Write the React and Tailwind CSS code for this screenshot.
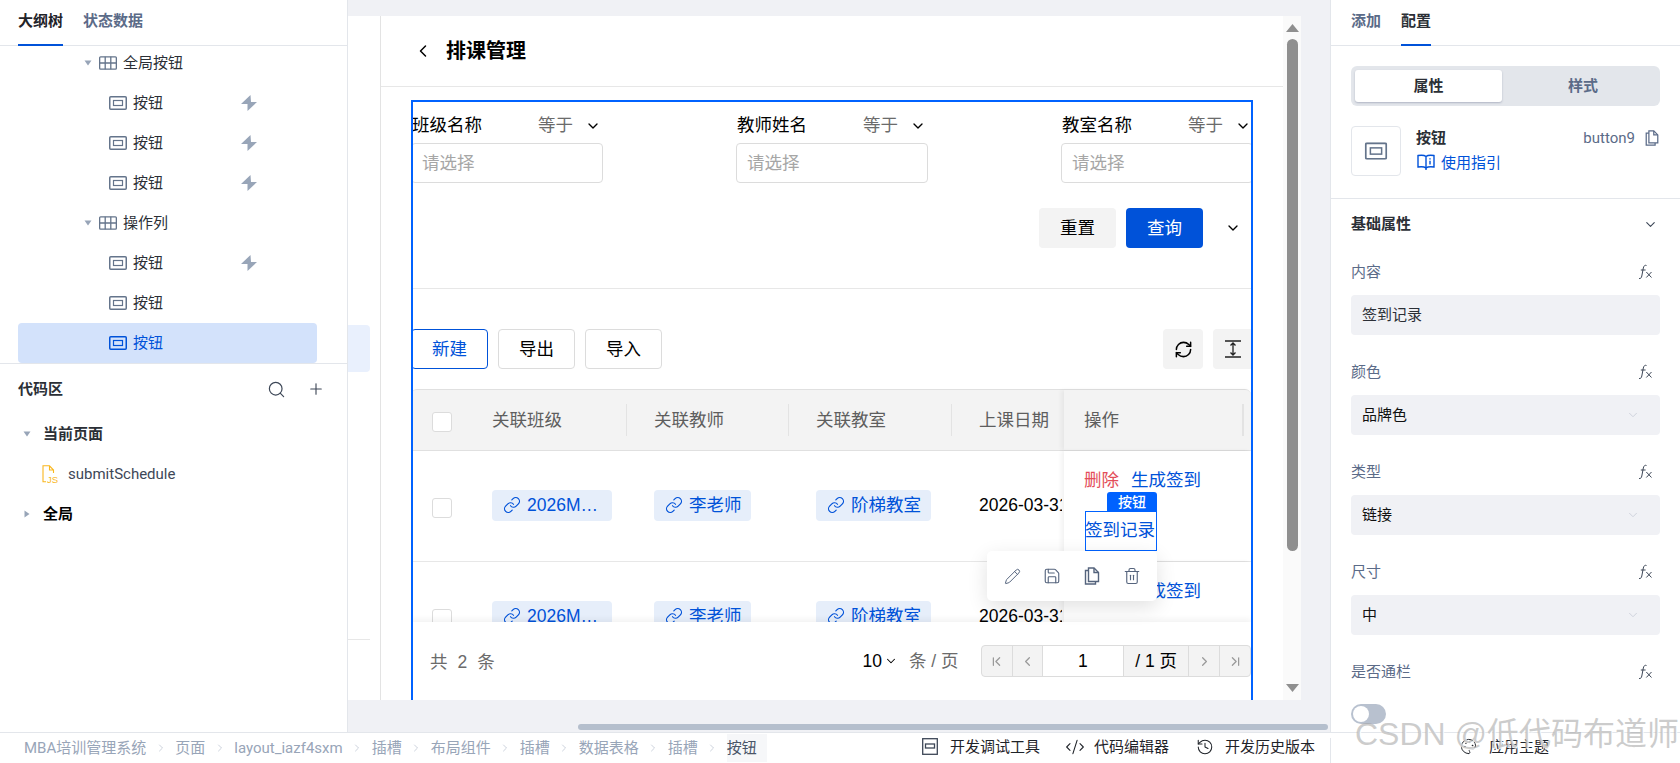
import { ChevronDown, ChevronFirst, ChevronLast, ChevronLeft, ChevronRight, CodeXml, History, Link, Palette, Pencil, Plus, RefreshCw, Save, Search, Trash2 } from "lucide-react";

const FilterNames = ["班级名称", "教师姓名", "教室名称"];
const TreeRows = [
  { type: "group", title: "全局按钮" },
  { type: "item", bolt: true },
  { type: "item", bolt: true },
  { type: "item", bolt: true },
  { type: "group", title: "操作列" },
  { type: "item", bolt: true },
  { type: "item" },
  { type: "item", active: true },
];
const Crumbs = ["MBA培训管理系统", "页面", "layout_iazf4sxm", "插槽", "布局组件", "插槽", "数据表格", "插槽"];
const Fields = [
  { label: "内容", value: "签到记录" },
  { label: "颜色", value: "品牌色", select: true },
  { label: "类型", value: "链接", select: true },
  { label: "尺寸", value: "中", select: true },
];

function ButtonIcon({ className = "text-[#64748b]" }) {
  return (
    <svg width="18" height="14" viewBox="0 0 18 14" fill="none" stroke="currentColor" className={className}>
      <rect x="0.75" y="0.75" width="16.5" height="12.5" rx="1" strokeWidth="1.5" />
      <rect x="4.5" y="4.5" width="9" height="5" strokeWidth="1.2" />
    </svg>
  );
}

function TableIcon() {
  return (
    <svg width="18" height="14" viewBox="0 0 18 14" fill="none" stroke="#64748b" strokeWidth="1.3">
      <rect x="0.65" y="0.8" width="16.7" height="12.4" rx="1" />
      <path d="M0.6 7H17.4M6.2 0.8V13.2M11.8 0.8V13.2" />
    </svg>
  );
}

function Bolt() {
  return (
    <svg width="16" height="16" viewBox="0 0 16 16" fill="#98a5b8">
      <path d="M9.5 0L0 9H6.5V16L16 7H10Z" />
    </svg>
  );
}

function Caret({ right }) {
  return (
    <svg width="8" height="8" viewBox="0 0 8 8" fill="#98a5b8" className={right ? "-rotate-90" : ""}>
      <path d="M0.5 1.5H7.5L4 6.5Z" />
    </svg>
  );
}

function FxIcon() {
  return (
    <svg width="15" height="16" viewBox="0 0 15 16" fill="none" stroke="#3d4757" strokeWidth="1">
      <path d="M8.5 1.5C7 0.8 5.8 1.8 5.3 4L3.8 12C3.4 14 2.4 15 1 14.4M2.8 6H7.6M8.3 8L13.5 13.5M13.5 8L8.3 13.5" />
    </svg>
  );
}

function CopyIcon({ size = 18 }) {
  return (
    <svg width={size} height={size} viewBox="0 0 18 18" fill="none" stroke="currentColor" strokeWidth="1.4">
      <path d="M5.5 1H11L15.5 5.5V14.5H5.5Z" />
      <path d="M11 1V5.5H15.5M5.5 3.5H2.5V17H12.5V14.5" />
    </svg>
  );
}

function TagCell({ text, width }) {
  return (
    <div className={`flex items-center h-[31px] mb-[2px] rounded-[4px] bg-[#e6eefa] pl-[11px] text-[#0052d9] text-[17.5px] ${width}`}>
      <Link size={18} strokeWidth={1.6} className="shrink-0" />
      <span className="ml-[6px] whitespace-nowrap">{text}</span>
    </div>
  );
}

function TableRow({ first }) {
  return (
    <div className="flex h-[111px] border-b border-[#e7e7e7]">
      <div className="w-[53px] shrink-0 flex items-center pl-[21px]">
        <div className="mt-[3px] w-[20px] h-[20px] rounded-[3px] border border-[#dcdcdc] bg-white" />
      </div>
      <div className="w-[163px] shrink-0 flex items-center pl-[28px]">
        <TagCell text="2026M…" width="w-[120px]" />
      </div>
      <div className="w-[162px] shrink-0 flex items-center pl-[27px]">
        <TagCell text="李老师" width="w-[97px]" />
      </div>
      <div className="w-[163px] shrink-0 flex items-center pl-[27px]">
        <TagCell text="阶梯教室" width="w-[115px]" />
      </div>
      <div className="w-[110px] mr-[2px] shrink-0 flex items-center pl-[27px] pb-[2px] overflow-hidden text-[17.5px] text-black whitespace-nowrap">2026-03-31</div>
      <div className="relative w-[187px] shrink-0 bg-white pl-[20px] pt-[17px] text-[17.5px] shadow-[-3px_0_4px_rgba(0,0,0,0.05)]">
        <div className="flex gap-[12px] leading-[24px]">
          <span className="text-[#e34d59]">删除</span>
          <span className="text-[#0052d9]">生成签到</span>
        </div>
        {first && (
          <>
            <div className="relative mt-[19px] ml-[1px] w-[72px] h-[40px] border border-[#0062ff] text-[#0052d9] leading-[36px] whitespace-nowrap">
              <span className="-ml-px">签到记录</span>
              <div className="absolute -top-[20px] -right-px w-[50px] h-[20px] rounded-t-[3px] bg-[#0062ff] text-white text-[14px] font-medium leading-[20px] text-center">按钮</div>
            </div>
            <div className="absolute z-10 left-[-77px] top-[100px] w-[170px] h-[50px] rounded-[5px] bg-white shadow-[0_6px_20px_rgba(0,0,0,0.12)] flex items-center pl-[17px] gap-[22px] text-[#55647d]">
              <Pencil size={17} strokeWidth={1.4} />
              <Save size={18} strokeWidth={1.5} />
              <CopyIcon />
              <Trash2 size={18} strokeWidth={1.5} />
            </div>
          </>
        )}
      </div>
    </div>
  );
}

export default function App() {
  return (
    <div className="w-[1680px] h-[763px] overflow-hidden relative flex flex-col bg-white font-['Roboto','Noto_Sans_CJK_SC',sans-serif] text-[15px] text-[#2b2f36]">
      <div className="flex h-[732px]">
        {/* left panel */}
        <aside className="w-[348px] shrink-0 border-r border-[#e3e6eb] flex flex-col">
          <div className="h-[46px] border-b border-[#e3e6eb] flex pl-[18px] gap-[20px] font-bold shrink-0">
            <div className="h-[46px] border-b-[2px] border-[#0052d9] pt-[10px] text-[#1f2329]">大纲树</div>
            <div className="pt-[10px] text-[#5b6b88]">状态数据</div>
          </div>
          <div className="h-[318px] shrink-0 overflow-hidden border-b border-[#e3e6eb] px-[18px]">
            <div className="-mt-[3px]">
              {TreeRows.map((row, i) =>
                row.type === "group" ? (
                  <div key={i} className="h-[40px] flex items-center pl-[66px]">
                    <Caret />
                    <span className="ml-[7px]"><TableIcon /></span>
                    <span className="ml-[6px]">{row.title}</span>
                  </div>
                ) : (
                  <div key={i} className={`h-[40px] w-[299px] flex items-center pl-[91px] rounded-[4px] ${row.active ? "bg-[#d3e2fb] text-[#0052d9]" : ""}`}>
                    <ButtonIcon className={row.active ? "text-[#0052d9]" : "text-[#64748b]"} />
                    <span className="ml-[6px] w-[108px]">按钮</span>
                    {row.bolt && <Bolt />}
                  </div>
                )
              )}
            </div>
          </div>
          <div className="flex-1 px-[18px]">
            <div className="h-[50px] flex items-center justify-between pr-[4px] font-bold">
              <span>代码区</span>
              <div className="flex items-center gap-[21px] text-[#3d4757]">
                <Search size={19} strokeWidth={1.5} />
                <Plus size={18} strokeWidth={1.5} />
              </div>
            </div>
            <div className="h-[40px] flex items-center pl-[5px] font-bold"><Caret /><span className="ml-[12px]">当前页面</span></div>
            <div className="h-[40px] flex items-center pl-[24px] text-[#3d4757]">
              <svg width="16" height="18" viewBox="0 0 16 18" fill="none" stroke="#f9b71f" strokeWidth="1.1">
                <path d="M4 16.8H1V0.8H7.5L11.5 5V8M7.5 0.8V5H11.5" />
                <text x="5" y="17.5" fontSize="9.5" fill="#f9b71f" stroke="none" fontFamily="Liberation Sans">JS</text>
              </svg>
              <span className="ml-[10px]">submitSchedule</span>
            </div>
            <div className="h-[40px] flex items-center pl-[5px] font-bold text-black"><Caret right /><span className="ml-[12px]">全局</span></div>
          </div>
        </aside>

        {/* canvas */}
        <main className="w-[982px] shrink-0 bg-[#f0f1f5] pt-[16px]">
          <div className="flex h-[684px]">
            <div className="w-[33px] shrink-0 bg-white border-r border-[#e3e3e3] flex flex-col">
              <div className="mt-[309px] h-[47px] w-[22px] rounded-r-[4px] bg-[#e9f0fd]" />
              <div className="mt-[267px] h-px w-[22px] bg-[#e7e7e7]" />
            </div>
            <div className="w-[902px] shrink-0 bg-white overflow-hidden text-[17.5px] font-['Liberation_Sans','Noto_Sans_CJK_SC',sans-serif]">
              <div className="h-[71px] border-b border-[#e7e7e7] flex items-center pl-[32px] text-black">
                <ChevronLeft size={20} strokeWidth={1.8} />
                <h1 className="ml-[13px] text-[20px] font-bold leading-none">排课管理</h1>
              </div>
              <div className="ml-[30px] mt-[13px] w-[842px] h-[600px] border-x-2 border-t-2 border-[#0062ff] overflow-hidden">
                <div className="-ml-[2px] w-[840px] text-black">
                  <div className="flex gap-[133px] mt-[5px]">
                    {FilterNames.map(name => (
                      <div key={name} className="w-[192px] shrink-0">
                        <div className="h-[36px] flex items-center pl-[1px] pt-[1px]">
                          <span className="w-[126px]">{name}</span>
                          <span className="text-[#6b6b6b]">等于</span>
                          <ChevronDown size={16} strokeWidth={2} className="ml-[12px]" />
                        </div>
                        <div className="h-[40px] rounded-[4px] border border-[#dcdcdc] pl-[10px] pt-[1px] flex items-center text-[#a6a6a6]">请选择</div>
                      </div>
                    ))}
                  </div>
                  <div className="mt-[25px] flex justify-end items-center pr-[10px]">
                    <button className="w-[77px] h-[40px] rounded-[4px] bg-[#f3f3f3]">重置</button>
                    <button className="ml-[10px] w-[77px] h-[40px] rounded-[4px] bg-[#0052d9] text-white">查询</button>
                    <ChevronDown size={16} strokeWidth={2} className="ml-[22px]" />
                  </div>
                  <div className="mt-[40px] h-px bg-[#e7e7e7]" />
                  <div className="mt-[40px] flex justify-between">
                    <div className="flex gap-[10px]">
                      <button className="w-[77px] h-[40px] rounded-[4px] border border-[#0052d9] text-[#0052d9]">新建</button>
                      <button className="w-[77px] h-[40px] rounded-[4px] border border-[#dcdcdc]">导出</button>
                      <button className="w-[77px] h-[40px] rounded-[4px] border border-[#dcdcdc]">导入</button>
                    </div>
                    <div className="flex gap-[10px] w-[88px]">
                      <div className="w-[40px] h-[40px] shrink-0 rounded-[4px] bg-[#f3f3f3] flex items-center justify-center"><RefreshCw size={19} strokeWidth={1.9} /></div>
                      <div className="w-[40px] h-[40px] shrink-0 rounded-[4px] bg-[#f3f3f3] flex items-center justify-center">
                        <svg width="18" height="18" viewBox="0 0 18 18" fill="none" stroke="#222" strokeWidth="1.3">
                          <path d="M1 1H17M1 17H17M9 3V15M6.5 5.5L9 3L11.5 5.5M6.5 12.5L9 15L11.5 12.5" />
                        </svg>
                      </div>
                    </div>
                  </div>
                  <div className="mt-[20px] h-[62px] flex rounded-t-[6px] border-y border-[#e0e0e0] bg-[#f3f3f3] text-[#5e5e5e]">
                    <div className="w-[53px] shrink-0 flex items-center pl-[21px]">
                      <div className="mt-[3px] w-[20px] h-[20px] rounded-[3px] border border-[#dcdcdc] bg-white" />
                    </div>
                    {["关联班级", "关联教师", "关联教室"].map((name, i) => (
                      <div key={name} className={`${i === 1 ? "w-[162px] pl-[27px]" : i === 0 ? "w-[163px] pl-[28px]" : "w-[163px] pl-[27px]"} shrink-0 flex items-center justify-between`}>
                        <span>{name}</span>
                        <span className="w-px h-[32px] bg-[#e3e3e3]" />
                      </div>
                    ))}
                    <div className="w-[112px] shrink-0 flex items-center pl-[27px]">上课日期</div>
                    <div className="w-[187px] shrink-0 flex items-center justify-between pl-[20px] pr-[7px] shadow-[-3px_0_4px_rgba(0,0,0,0.05)]">
                      <span>操作</span>
                      <span className="w-[2px] h-[32px] bg-[#e3e3e3]" />
                    </div>
                  </div>
                  <div className="h-[171px]">
                    <TableRow first />
                    <TableRow />
                  </div>
                  <div className="relative h-[78px] bg-white shadow-[0_-3px_6px_rgba(0,0,0,0.05)] flex items-center pl-[19px] text-[#6b6b6b]">
                    <div className="flex gap-[10px] mt-[3px]"><span>共</span><span>2</span><span>条</span></div>
                    <div className="ml-auto flex items-center">
                      <span className="text-black">10</span>
                      <ChevronDown size={14} strokeWidth={1.8} className="ml-[2px] text-black" />
                      <span className="ml-[11px] w-[72px]">条 / 页</span>
                      <div className="w-[270px] h-[32px] flex rounded-[4px] border border-[#dcdcdc] bg-[#f3f3f3] text-[#9a9a9a] shrink-0">
                        <div className="w-[31px] flex items-center justify-center border-r border-[#dcdcdc]"><ChevronFirst size={15} /></div>
                        <div className="w-[30px] flex items-center justify-center border-r border-[#dcdcdc]"><ChevronLeft size={15} /></div>
                        <div className="w-[81px] bg-white flex items-center justify-center text-black">1</div>
                        <div className="w-[67px] flex items-center justify-center text-black border-x border-[#dcdcdc]">/ 1 页</div>
                        <div className="w-[31px] flex items-center justify-center border-r border-[#dcdcdc]"><ChevronRight size={15} /></div>
                        <div className="w-[30px] flex items-center justify-center"><ChevronLast size={15} /></div>
                      </div>
                    </div>
                  </div>
                </div>
              </div>
            </div>
            {/* page scrollbar */}
            <div className="w-[18px] shrink-0 bg-[#fafafa] relative flex flex-col items-center">
              <svg width="13" height="8" viewBox="0 0 13 8" fill="#8f8f8f" className="mt-[8px]"><path d="M6.5 0L13 8H0Z" /></svg>
              <div className="mt-[7px] w-[11px] h-[512px] rounded-full bg-[#8f8f8f]" />
              <svg width="13" height="8" viewBox="0 0 13 8" fill="#8f8f8f" className="mt-auto mb-[8px]"><path d="M0 0H13L6.5 8Z" /></svg>
            </div>
          </div>
          <div className="mt-[24px] ml-[230px] w-[750px] h-[6px] rounded-full bg-[#b5bfcd]" />
        </main>

        {/* right panel */}
        <aside className="flex-1 border-l border-[#e3e6eb] bg-white">
          <div className="h-[46px] border-b border-[#e3e6eb] flex pl-[20px] gap-[20px] font-bold">
            <div className="pt-[10px] text-[#5b6b88]">添加</div>
            <div className="h-[46px] border-b-[2px] border-[#0052d9] pt-[10px]">配置</div>
          </div>
          <div className="px-[20px] pt-[20px] h-[153px] border-b border-[#e3e6eb]">
            <div className="h-[40px] rounded-[6px] bg-[#e3e6eb] p-[4px] flex">
              <div className="w-[147px] rounded-[3px] bg-white shadow-[0_1px_2px_rgba(80,90,120,0.35)] flex items-center justify-center font-bold">属性</div>
              <div className="flex-1 flex items-center justify-center pl-[8px] font-bold text-[#5b6b88]">样式</div>
            </div>
            <div className="mt-[20px] flex">
              <div className="w-[50px] h-[50px] rounded-[4px] border border-[#e3e6eb] flex items-center justify-center shrink-0">
                <span className="scale-125"><ButtonIcon /></span>
              </div>
              <div className="ml-[15px] flex-1">
                <div className="flex items-center justify-between mt-[1px]">
                  <span className="font-bold">按钮</span>
                  <div className="flex items-center text-[#5b6b88]">
                    button9
                    <span className="ml-[9px]"><CopyIcon size={16} /></span>
                  </div>
                </div>
                <div className="mt-[2px] ml-[1px] flex items-center text-[#0052d9]">
                  <svg width="18" height="17" viewBox="0 0 18 17" fill="none" stroke="currentColor" strokeWidth="1.4">
                    <path d="M9 2.5C7.5 1.2 4 1 1 1.5V13C4 12.5 7.5 12.8 9 14C10.5 12.8 14 12.5 17 13V1.5C14 1 10.5 1.2 9 2.5ZM9 2.5V14" />
                    <path d="M13 4.2V5.4M13 6.8V10.5M9 14V16" />
                  </svg>
                  <span className="ml-[6px]">使用指引</span>
                </div>
              </div>
            </div>
          </div>
          <div className="px-[20px]">
            <div className="h-[50px] flex items-center justify-between font-bold">
              <span>基础属性</span>
              <ChevronDown size={15} strokeWidth={1.8} className="mr-[2px] text-[#3d4757]" />
            </div>
            {Fields.map(field => (
              <div key={field.label} className="h-[100px]">
                <div className="h-[46px] flex items-center justify-between text-[#5b6b88]">
                  {field.label}
                  <span className="mr-[7px]"><FxIcon /></span>
                </div>
                <div className="h-[40px] rounded-[4px] bg-[#f0f1f5] pl-[11px] pr-[20px] flex items-center justify-between">
                  <span className={field.select ? "text-[#111]" : "text-[#2b2f36]"}>{field.value}</span>
                  {field.select && <ChevronDown size={14} strokeWidth={1.5} className="text-[#c9ced8]" />}
                </div>
              </div>
            ))}
            <div className="h-[46px] flex items-center justify-between text-[#5b6b88]">
              是否通栏
              <span className="mr-[7px]"><FxIcon /></span>
            </div>
            <div className="w-[35px] h-[20px] mt-[9px] rounded-full bg-[#b8c1cf] p-[2px]">
              <div className="w-[16px] h-[16px] rounded-full bg-white" />
            </div>
          </div>
        </aside>
      </div>

      {/* bottom bar */}
      <footer className="h-[31px] border-t border-[#e3e6eb] flex items-center pl-[24px] text-[#98a5b8] bg-white">
        {Crumbs.map((crumb, i) => (
          <span key={i} className="flex items-center whitespace-nowrap">
            {crumb}
            <ChevronRight size={12} strokeWidth={1} className="mx-[8.5px] text-[#98a5b8]" />
          </span>
        ))}
        <span className="h-[28px] w-[40px] bg-[#f6f7f9] flex items-center text-[#4a5568]">按钮</span>
        <div className="absolute left-[922px] bottom-[5px] flex items-center text-[#1f2329] whitespace-nowrap">
          <span className="w-[28px]">
            <svg width="16" height="17" viewBox="0 0 16 17" fill="none" stroke="#3d4757" strokeWidth="1.3">
              <rect x="0.7" y="0.7" width="14.6" height="15.6" />
              <rect x="3.5" y="6" width="9" height="4" />
            </svg>
          </span>
          开发调试工具
          <CodeXml size={20} strokeWidth={1.3} className="ml-[25px] mr-[9px]" />
          代码编辑器
          <History size={18} strokeWidth={1.4} className="ml-[27px] mr-[11px]" />
          开发历史版本
        </div>
        <div className="absolute left-[1330px] bottom-0 w-px h-[25px] bg-[#e3e6eb]" />
        <div className="absolute left-[1460px] bottom-[5px] flex items-center text-[#1f2329] whitespace-nowrap">
          <Palette size={17} strokeWidth={1.4} className="mr-[12px]" />
          应用主题
        </div>
      </footer>
      <div className="absolute left-[1355px] top-[713px] text-[32px] leading-[42px] whitespace-nowrap text-[#9a9a9a]/50 font-['Liberation_Sans','Noto_Sans_CJK_SC',sans-serif] [text-shadow:1px_1px_1px_#fff]">CSDN @低代码布道师</div>
    </div>
  );
}
